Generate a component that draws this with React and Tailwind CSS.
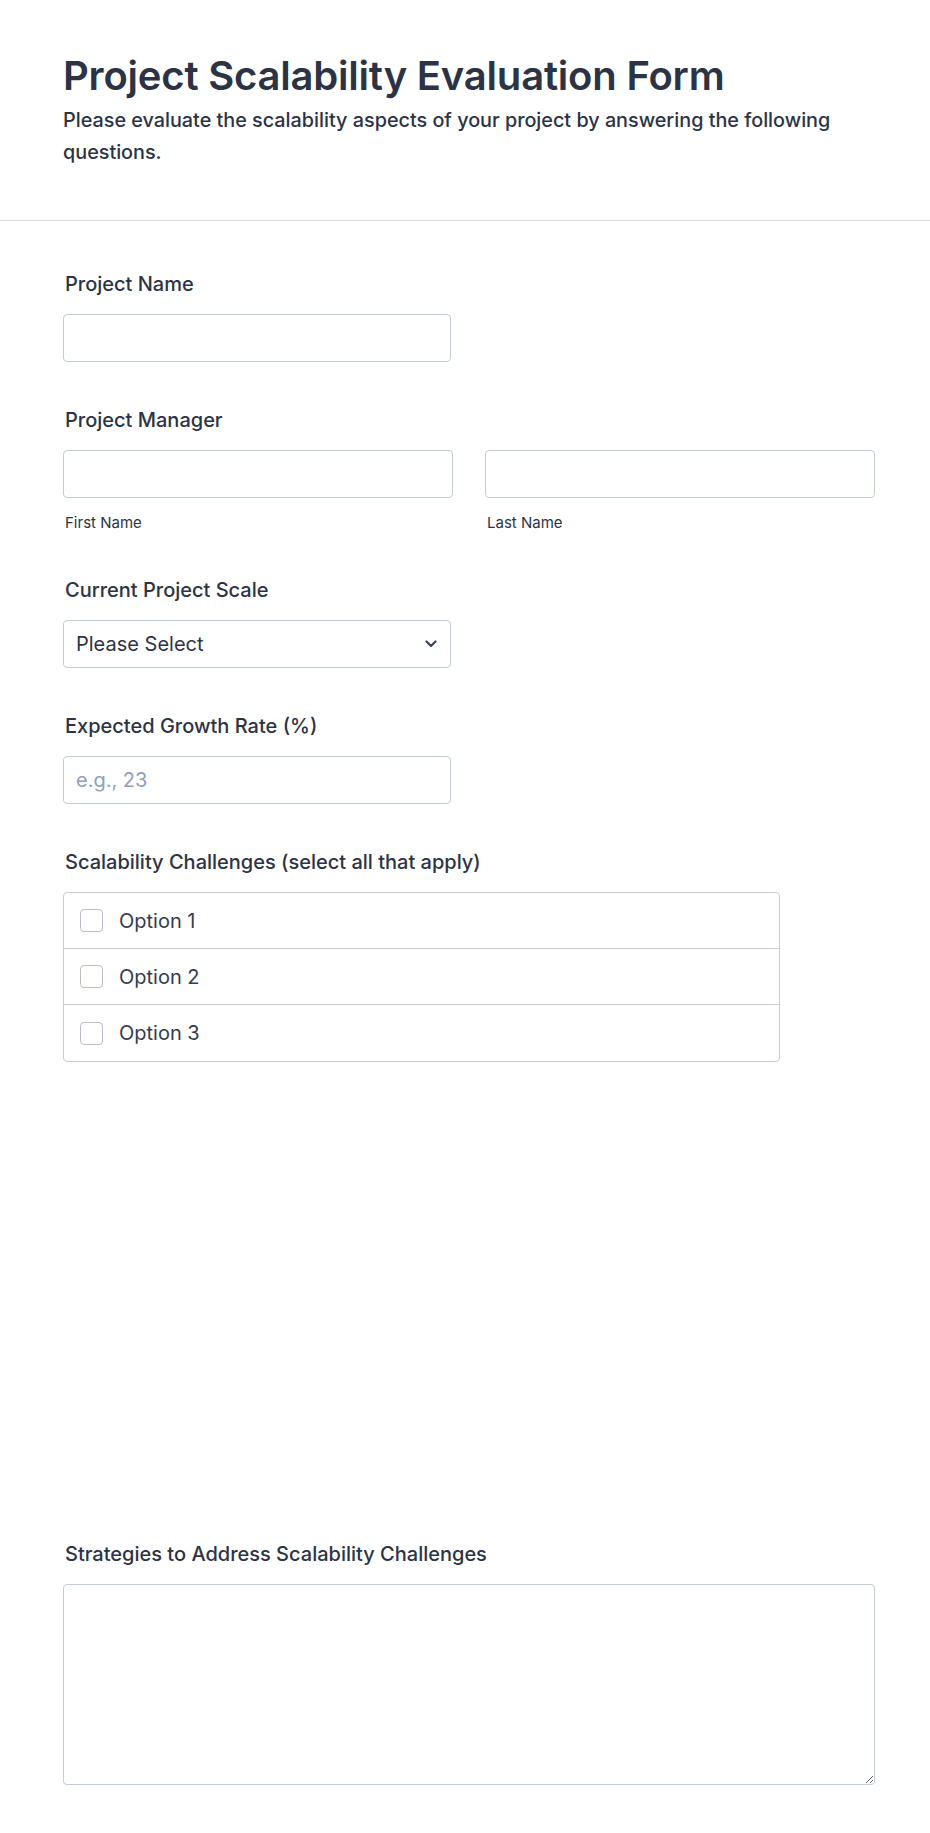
import React from "react";

function Label({ children }) {
  return (
    <div className="h-7 mb-4 pl-[2px] text-[20px] leading-7 font-medium text-[#2c3345]">{children}</div>
  );
}

function TextInput({ className = "", placeholder }) {
  return (
    <input
      type="text"
      placeholder={placeholder}
      className={`h-12 rounded-[4px] border border-[#c3cad8] bg-white px-3 text-[20px] text-[#2c3345] placeholder:text-[#8fa0b8] outline-none ${className}`}
    />
  );
}

export default function App() {
  return (
    <div className="min-h-[1833px] bg-white font-['Inter',sans-serif] text-[#2c3345]">
      <header className="pl-[63px] pr-[55px] pt-[48px] pb-[52px] border-b border-[#d8d8e6]">
        <h1 className="text-[40px] leading-[56px] font-semibold tracking-[-0.005em] text-[#2c3345]">
          Project Scalability Evaluation Form
        </h1>
        <p className="w-[812px] text-[19.8px] leading-[32px] font-medium text-[#2c3345]">
          Please evaluate the scalability aspects of your project by answering the following questions.
        </p>
      </header>

      <main className="pl-[63px] pt-[49px] w-[875px]">
        <section className="mb-[44px]">
          <Label>Project Name</Label>
          <TextInput className="w-[388px]" />
        </section>

        <section className="mb-[43px]">
          <Label>Project Manager</Label>
          <div className="flex gap-8">
            <div className="flex flex-col w-[390px]">
              <TextInput className="w-full" />
              <span className="mt-[15px] pl-[2px] text-[15px] leading-5 text-[#2c3345]">First Name</span>
            </div>
            <div className="flex flex-col w-[390px]">
              <TextInput className="w-full" />
              <span className="mt-[15px] pl-[2px] text-[15px] leading-5 text-[#2c3345]">Last Name</span>
            </div>
          </div>
        </section>

        <section className="mb-[44px]">
          <Label>Current Project Scale</Label>
          <div className="relative w-[388px] h-12 rounded-[4px] border border-[#c3cad8] bg-white flex items-center px-3">
            <span className="text-[20px] text-[#2c3345]">Please Select</span>
            <svg
              className="absolute right-[13px] top-1/2 -translate-y-1/2"
              width="12"
              height="8"
              viewBox="0 0 12 8"
              fill="none"
            >
              <path d="M1.5 1.5L6 6L10.5 1.5" stroke="#3b4459" strokeWidth="2.2" strokeLinecap="round" strokeLinejoin="round" />
            </svg>
          </div>
        </section>

        <section className="mb-[44px]">
          <Label>Expected Growth Rate (%)</Label>
          <TextInput className="w-[388px]" placeholder="e.g., 23" />
        </section>

        <section className="mb-[478px]">
          <Label>Scalability Challenges (select all that apply)</Label>
          <div className="w-[717px] rounded-[4px] border border-[#c9ccd6] bg-white">
            {["Option 1", "Option 2", "Option 3"].map((o, i) => (
              <div
                key={o}
                className={`h-14 flex items-center pl-4 ${i < 2 ? "border-b border-[#c9ccd6]" : ""}`}
              >
                <span className="w-[23px] h-[23px] rounded-[4px] border border-[#b8bdc9] bg-white shrink-0" />
                <span className="ml-4 text-[20px] text-[#343c4e]">{o}</span>
              </div>
            ))}
          </div>
        </section>

        <section>
          <Label>Strategies to Address Scalability Challenges</Label>
          <textarea className="block w-[812px] h-[201px] rounded-[4px] border border-[#c3cad8] bg-white p-3 text-[20px] outline-none" />
        </section>
      </main>
    </div>
  );
}
